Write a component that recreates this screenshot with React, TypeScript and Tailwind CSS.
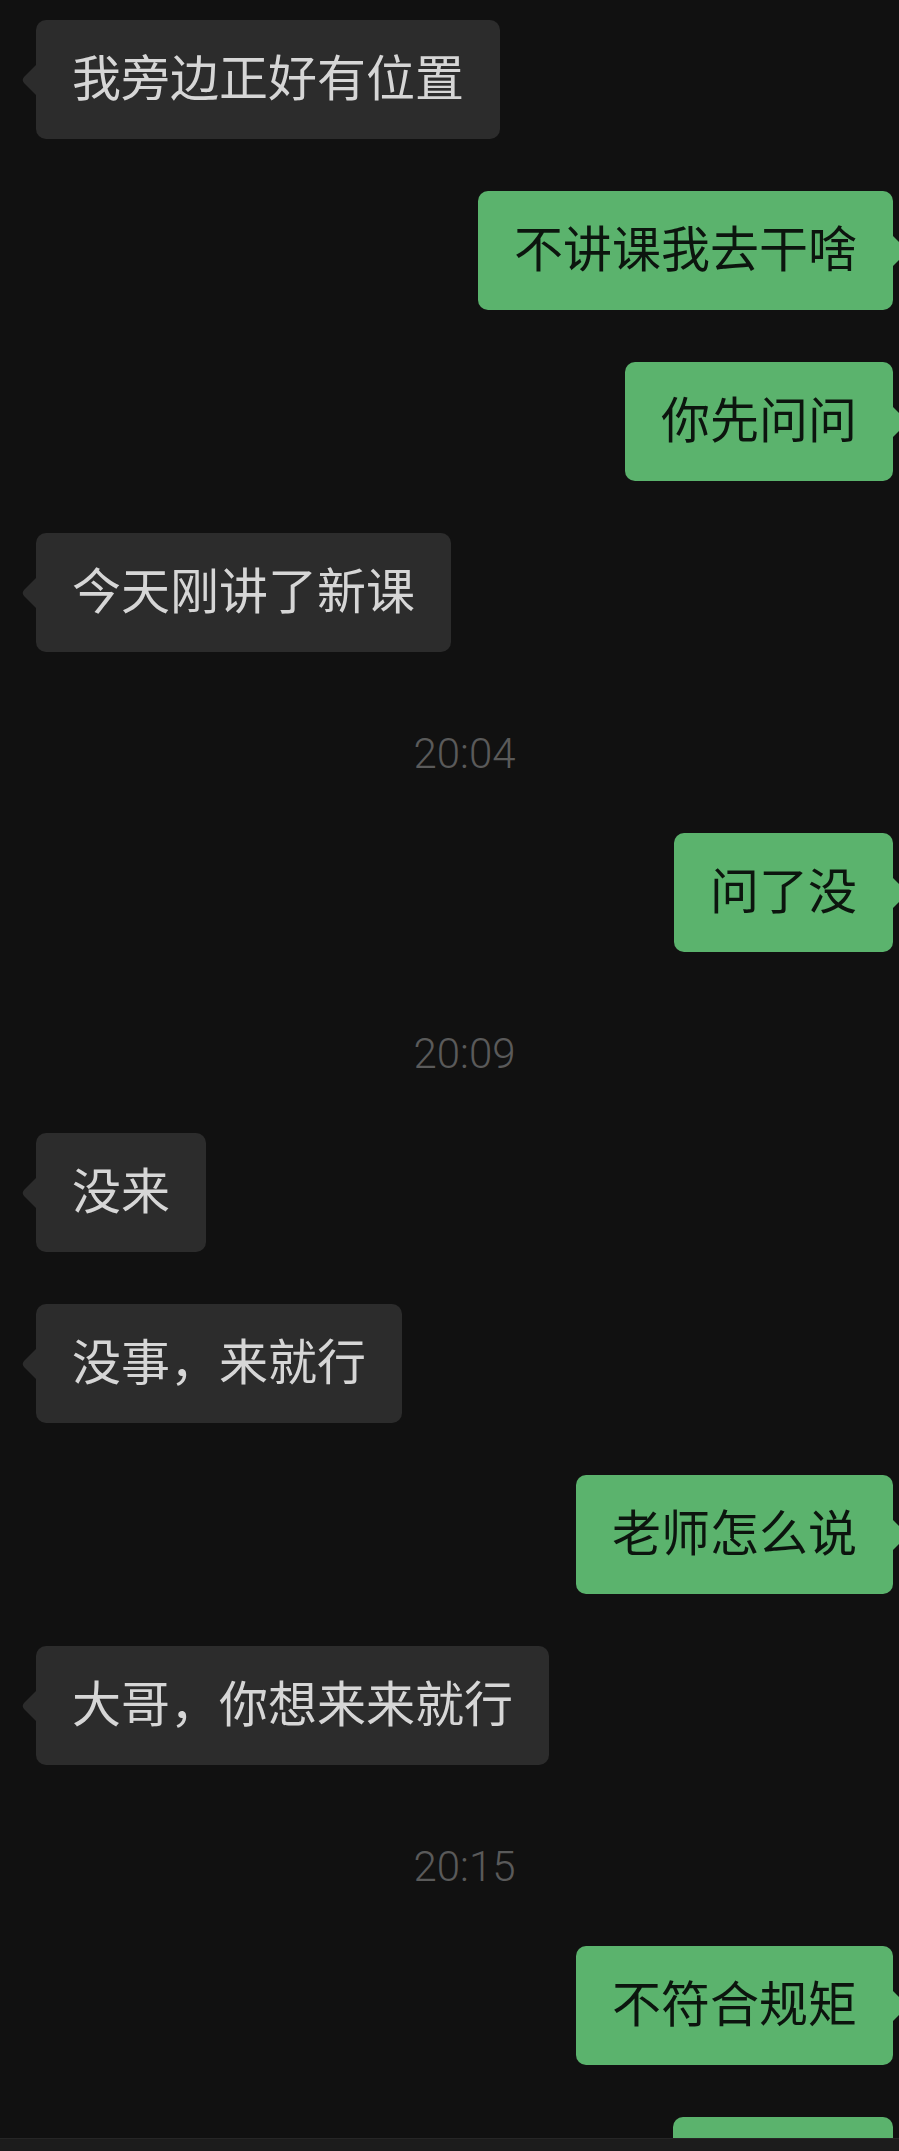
import React from "react";

type Msg =
  | { kind: "in"; text: string }
  | { kind: "out"; text: string }
  | { kind: "time"; text: string }
  | { kind: "blank" };

const messages: Msg[] = [
  { kind: "in", text: "我旁边正好有位置" },
  { kind: "out", text: "不讲课我去干啥" },
  { kind: "out", text: "你先问问" },
  { kind: "in", text: "今天刚讲了新课" },
  { kind: "time", text: "20:04" },
  { kind: "out", text: "问了没" },
  { kind: "time", text: "20:09" },
  { kind: "in", text: "没来" },
  { kind: "in", text: "没事，来就行" },
  { kind: "out", text: "老师怎么说" },
  { kind: "in", text: "大哥，你想来来就行" },
  { kind: "time", text: "20:15" },
  { kind: "out", text: "不符合规矩" },
  { kind: "blank" },
];

const cjk = {
  fontFamily:
    '"Noto Sans CJK SC", "Noto Sans", "Liberation Sans", sans-serif',
};

function InBubble({ text }: { text: string }) {
  return (
    <div className="flex justify-start pl-[36px]">
      <div
        className="relative rounded-[10px] bg-[#2c2c2c] px-[36px] pt-[21px] pb-[31px] text-[49px] leading-[67px] text-[#d6d6d6] whitespace-nowrap"
        style={cjk}
      >
        <svg
          className="absolute left-[-15px] top-1/2 -translate-y-1/2"
          width="16"
          height="32"
          viewBox="0 0 16 32"
        >
          <path d="M16 0 L3 13 Q0.5 16 3 19 L16 32 Z" fill="#2c2c2c" />
        </svg>
        {text}
      </div>
    </div>
  );
}

function OutBubble({ text }: { text: string }) {
  return (
    <div className="flex justify-end pr-[36px]">
      <div
        className="relative rounded-[10px] bg-[#5bb36d] px-[36px] pt-[21px] pb-[31px] text-[49px] leading-[67px] text-[#0c150e] whitespace-nowrap"
        style={cjk}
      >
        <svg
          className="absolute right-[-15px] top-1/2 -translate-y-1/2"
          width="16"
          height="32"
          viewBox="0 0 16 32"
        >
          <path d="M0 0 L13 13 Q15.5 16 13 19 L0 32 Z" fill="#5bb36d" />
        </svg>
        {text}
      </div>
    </div>
  );
}

function BlankOut() {
  return (
    <div className="flex justify-end pr-[36px]">
      <div className="relative w-[220px] h-[119px] rounded-[10px] bg-[#5bb36d]">
        <svg
          className="absolute right-[-15px] top-1/2 -translate-y-1/2"
          width="16"
          height="32"
          viewBox="0 0 16 32"
        >
          <path d="M0 0 L13 13 Q15.5 16 13 19 L0 32 Z" fill="#5bb36d" />
        </svg>
      </div>
    </div>
  );
}

function TimeRow({ text }: { text: string }) {
  return (
    <div
      className="h-[77px] pt-[30px] text-center text-[42px] leading-[40px] font-light text-[#5a5a5a]"
      style={{ fontFamily: 'Roboto, Inter, "Liberation Sans", sans-serif' }}
    >
      {text}
    </div>
  );
}

export default function App() {
  return (
    <div className="relative w-[899px] h-[2151px] overflow-hidden bg-[#111111]">
      <div className="w-[929px] flex flex-col gap-[52px] pt-[20px]">
        {messages.map((m, i) =>
          m.kind === "in" ? (
            <InBubble key={i} text={m.text} />
          ) : m.kind === "out" ? (
            <OutBubble key={i} text={m.text} />
          ) : m.kind === "time" ? (
            <TimeRow key={i} text={m.text} />
          ) : (
            <BlankOut key={i} />
          )
        )}
      </div>
      <div className="absolute bottom-0 left-0 right-0 h-[13px] bg-[#1c1c1c] border-t border-[#262626]" />
    </div>
  );
}
